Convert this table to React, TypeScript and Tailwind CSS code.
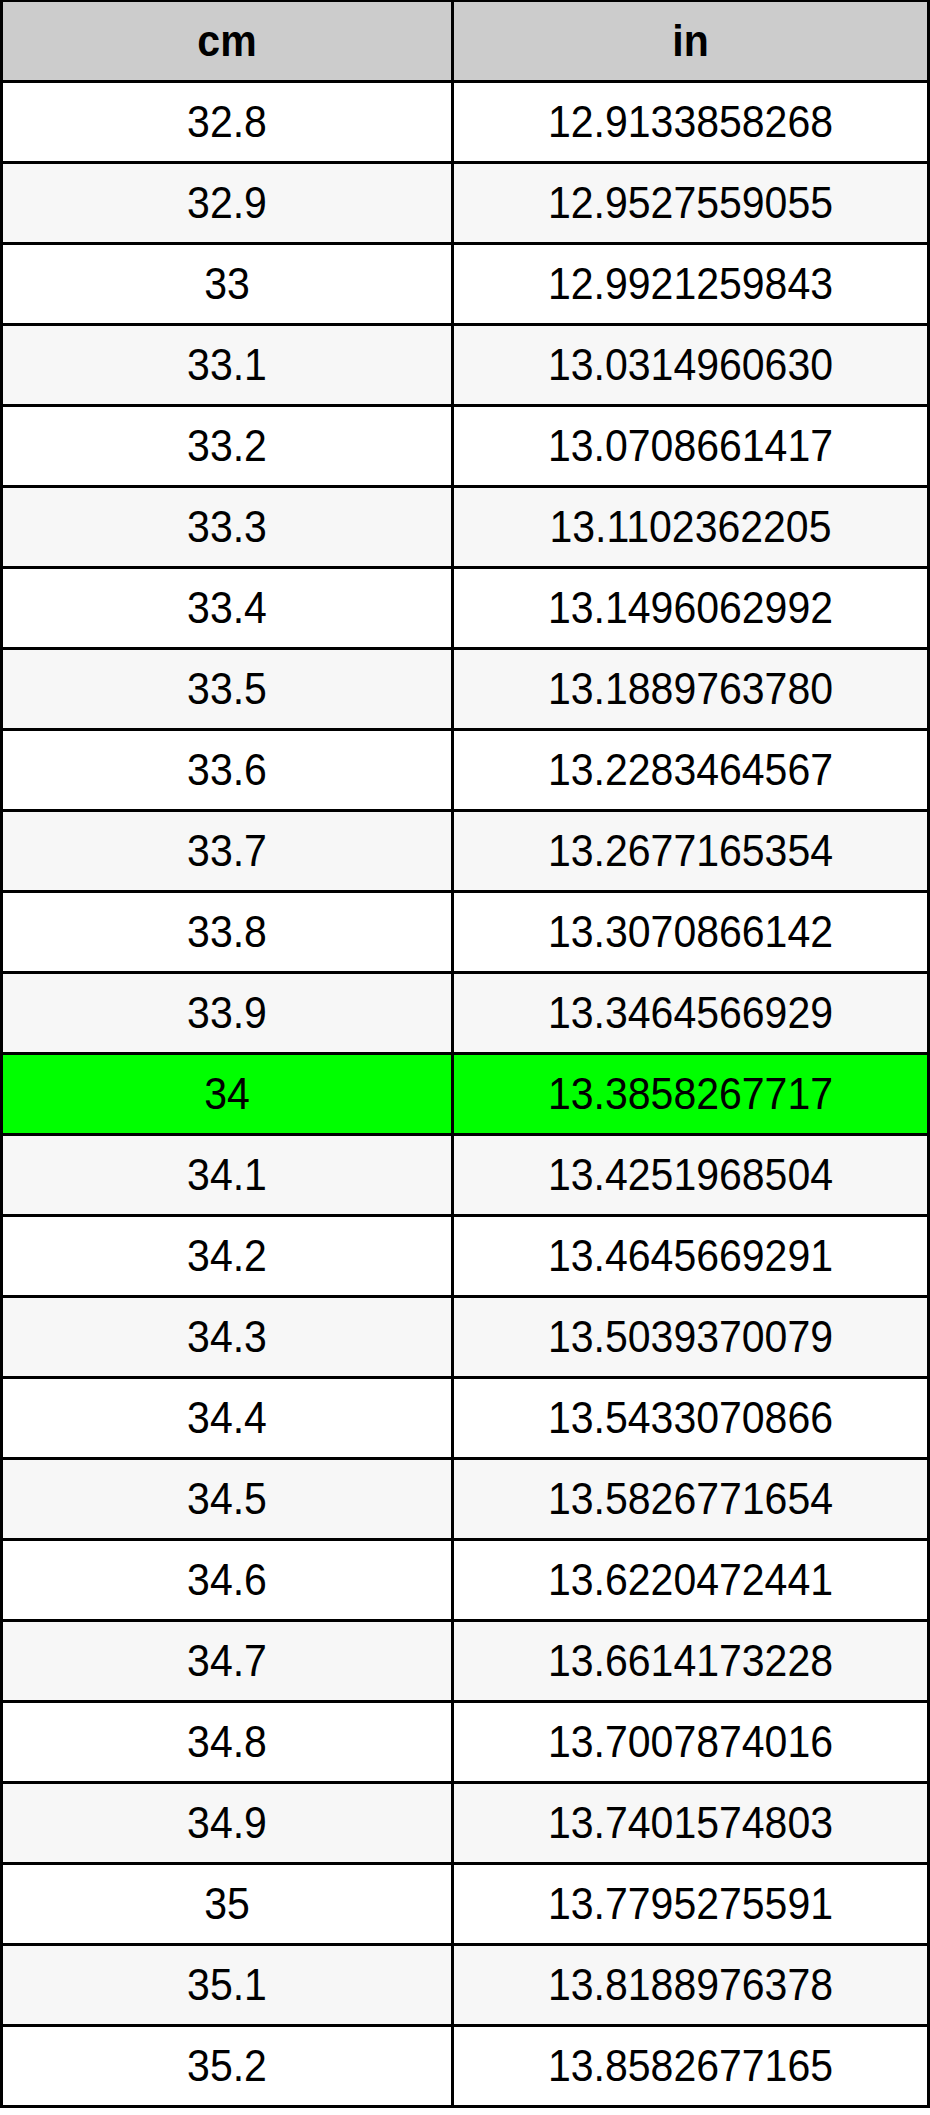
const rows: [string, string][] = [
  ['32.8', '12.9133858268'],
  ['32.9', '12.9527559055'],
  ['33', '12.9921259843'],
  ['33.1', '13.0314960630'],
  ['33.2', '13.0708661417'],
  ['33.3', '13.1102362205'],
  ['33.4', '13.1496062992'],
  ['33.5', '13.1889763780'],
  ['33.6', '13.2283464567'],
  ['33.7', '13.2677165354'],
  ['33.8', '13.3070866142'],
  ['33.9', '13.3464566929'],
  ['34', '13.3858267717'],
  ['34.1', '13.4251968504'],
  ['34.2', '13.4645669291'],
  ['34.3', '13.5039370079'],
  ['34.4', '13.5433070866'],
  ['34.5', '13.5826771654'],
  ['34.6', '13.6220472441'],
  ['34.7', '13.6614173228'],
  ['34.8', '13.7007874016'],
  ['34.9', '13.7401574803'],
  ['35', '13.7795275591'],
  ['35.1', '13.8188976378'],
  ['35.2', '13.8582677165'],
];

function Cell({ children, bold }: { children: string; bold?: boolean }) {
  return (
    <div className="flex items-center justify-center">
      <span className={`inline-block scale-y-[1.08] text-[41px] leading-none text-black ${bold ? 'font-bold' : ''}`}>
        {children}
      </span>
    </div>
  );
}

export default function App() {
  return (
    <div className="bg-white w-[930px] h-[2115px]" style={{ fontFamily: '"Liberation Sans", Arial, sans-serif' }}>
      <div className="w-[930px] border-x-[3px] border-t-[2px] border-b-[3px] border-black">
        <div className="grid grid-cols-[448px_473px] gap-x-[3px] bg-black h-[78px] box-content border-b-[3px] border-black">
          <div className="bg-[#cccccc] flex items-center justify-center">
            <Cell bold>cm</Cell>
          </div>
          <div className="bg-[#cccccc] flex items-center justify-center">
            <Cell bold>in</Cell>
          </div>
        </div>
        {rows.map(([cm, inch], i) => {
          const bg = i === 12 ? 'bg-[#00ff00]' : i % 2 === 0 ? 'bg-white' : 'bg-[#f7f7f7]';
          const last = i === rows.length - 1;
          return (
            <div
              key={cm}
              className={`grid grid-cols-[448px_473px] gap-x-[3px] bg-black h-[78px] ${last ? '' : 'box-content border-b-[3px] border-black'}`}
            >
              <div className={`${bg} flex items-center justify-center`}>
                <Cell>{cm}</Cell>
              </div>
              <div className={`${bg} flex items-center justify-center`}>
                <Cell>{inch}</Cell>
              </div>
            </div>
          );
        })}
      </div>
    </div>
  );
}
